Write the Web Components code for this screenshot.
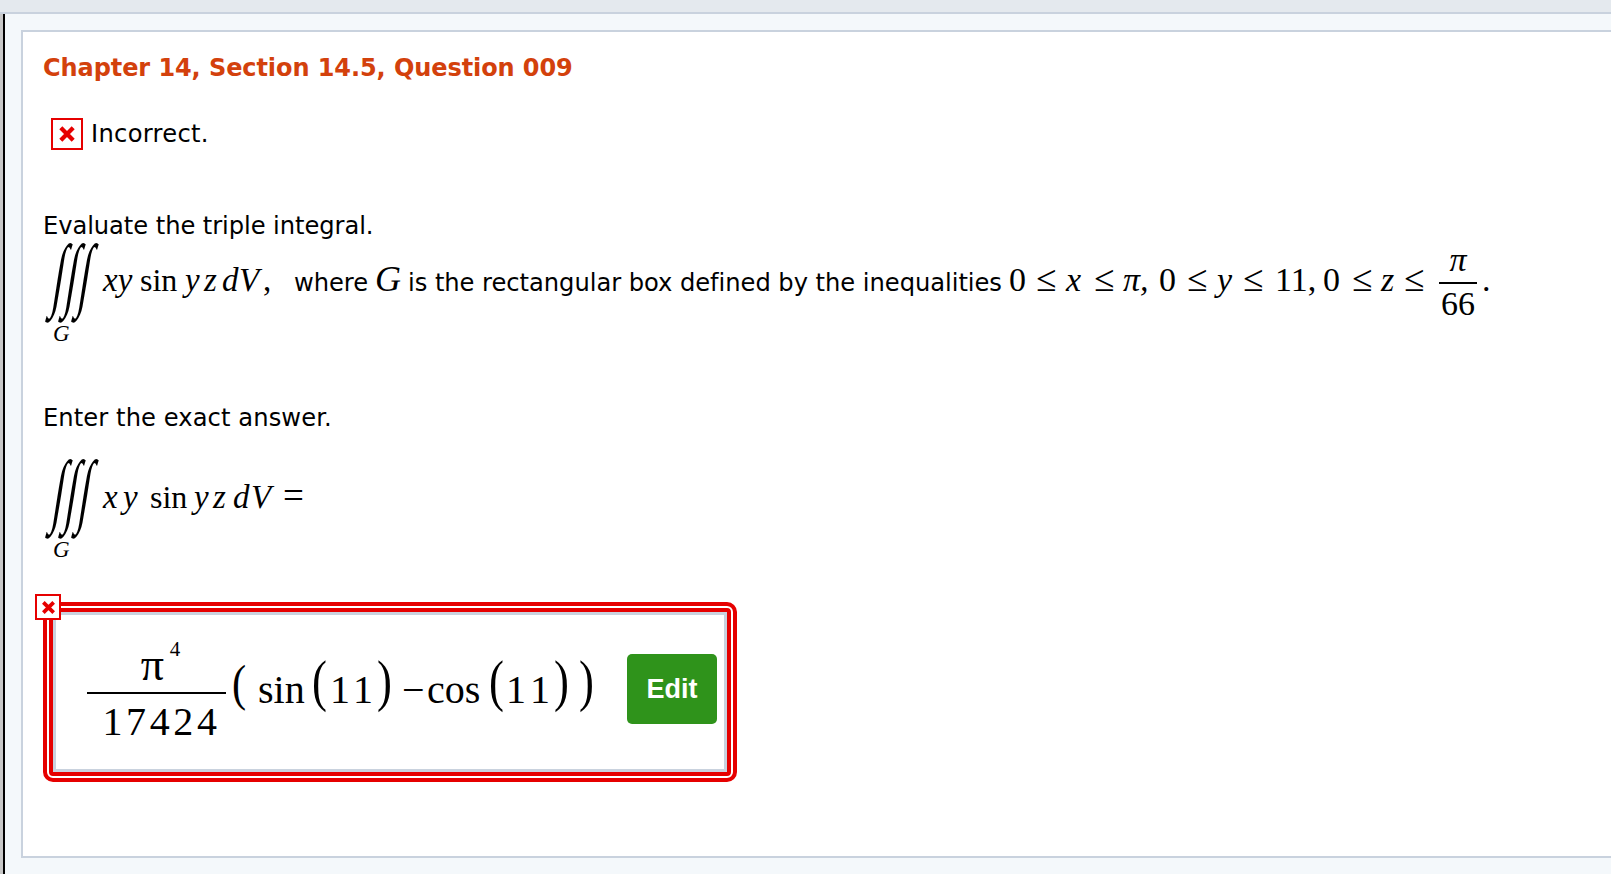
<!DOCTYPE html>
<html lang="en">
<head>
<meta charset="utf-8">
<title>Chapter 14, Section 14.5, Question 009</title>
<style>
  html, body { margin: 0; height: 100%; background: #f4f8fb; overflow: hidden; }
</style>
</head>
<body>
<quiz-page>
  <quiz-card>
    <h-title slot="title">Chapter 14, Section 14.5, Question 009</h-title>
    <status-line>Incorrect.</status-line>
    <prose-line top="60" spacing="-0.07">Evaluate the triple integral.</prose-line>
    <question-row></question-row>
    <prose-line top="60" spacing="0.08">Enter the exact answer.</prose-line>
    <prompt-row></prompt-row>
    <answer-box>
      <edit-button slot="action">Edit</edit-button>
    </answer-box>
  </quiz-card>
</quiz-page>

<script>
const SERIF = '"Liberation Serif", "Times New Roman", serif';
const SANS = '"DejaVu Sans", Verdana, sans-serif';

// [text, left x on the page, class]; each token gets the width up to the next one
function tokens(list) {
  return list.map(([text, x, cls], i) => {
    const next = list[i + 1];
    const w = next ? `width:${next[1] - x}px` : '';
    return `<span class="t ${cls || ''}" style="${w}">${text}</span>`;
  }).join('');
}

const TOKEN_CSS = `
  .run { display: flex; align-items: baseline; white-space: pre; font-family: ${SERIF}; color: #000; }
  .t { flex: none; display: block; }
  .i { font-style: italic; }
  .sans { font-family: ${SANS}; }
`;

class QuizPage extends HTMLElement {
  constructor() {
    super();
    this.attachShadow({ mode: 'open' });
    this.shadowRoot.innerHTML = `
      <style>
        :host { display: block; height: 874px; }
        .top { height: 12px; background: #e4e9ee; border-bottom: 2px solid #c9d2de; }
        .rail { height: 860px; box-sizing: border-box; border-left: 3px solid #c8c8c8; }
        .inner { height: 100%; box-sizing: border-box; border-left: 2px solid #000; padding: 16px 0 0 16px; }
      </style>
      <div class="top"></div>
      <div class="rail"><div class="inner"><slot></slot></div></div>
    `;
  }
}

class QuizCard extends HTMLElement {
  constructor() {
    super();
    this.attachShadow({ mode: 'open' });
    this.shadowRoot.innerHTML = `
      <style>
        :host {
          display: block;
          box-sizing: border-box;
          height: 828px;
          background: #fff;
          border: 2px solid #c9d2de;
          border-right: 0;
          padding: 20px 0 0 20px;
        }
      </style>
      <slot name="title"></slot>
      <slot></slot>
    `;
  }
}

class HTitle extends HTMLElement {
  constructor() {
    super();
    this.attachShadow({ mode: 'open' });
    this.shadowRoot.innerHTML = `
      <style>
        :host {
          display: block;
          font: bold 24px/32px ${SANS};
          letter-spacing: -0.08px;
          color: #d3410c;
          white-space: nowrap;
        }
      </style>
      <slot></slot>
    `;
  }
}

const CROSS = (size, w) => `<svg width="${size}" height="${size}" viewBox="0 0 16 16" aria-hidden="true">
  <path d="M2.5 2.5 L13.5 13.5 M13.5 2.5 L2.5 13.5" fill="none" stroke="#e60000" stroke-width="${w}"/></svg>`;

class StatusLine extends HTMLElement {
  constructor() {
    super();
    this.attachShadow({ mode: 'open' });
    this.shadowRoot.innerHTML = `
      <style>
        :host {
          display: flex;
          align-items: center;
          margin: 34px 0 0 8px;
          height: 32px;
          font: 24.2px/32px ${SANS};
          letter-spacing: 0.3px;
          color: #000;
        }
        .box {
          box-sizing: border-box;
          width: 32px;
          height: 32px;
          border: 2px solid #e60000;
          display: flex;
          align-items: center;
          justify-content: center;
          margin-right: 8px;
        }
      </style>
      <span class="box">${CROSS(18, 3.8)}</span>
      <slot></slot>
    `;
  }
}

class ProseLine extends HTMLElement {
  constructor() {
    super();
    this.attachShadow({ mode: 'open' });
    this.shadowRoot.innerHTML = `
      <style>
        :host {
          display: block;
          font: 24.2px/32px ${SANS};
          color: #000;
          white-space: nowrap;
        }
      </style>
      <slot></slot>
    `;
  }
  connectedCallback() {
    this.style.marginTop = `${this.getAttribute('top') || 0}px`;
    this.style.letterSpacing = `${this.getAttribute('spacing') || 0}px`;
  }
}

class TripleIntegral extends HTMLElement {
  constructor() {
    super();
    this.attachShadow({ mode: 'open' });
    this.shadowRoot.innerHTML = `
      <style>
        :host {
          display: block;
          flex: none;
          width: 58px;
          height: 100px;
          margin-left: 2px;
          font-family: ${SERIF};
          color: #000;
        }
        .signs {
          display: flex;
          height: 80px;
          align-items: center;
          font-size: 70px;
          line-height: 80px;
        }
        .signs span {
          display: block;
          flex: none;
          width: 13px;
          transform: translate(7px, -8px) skewX(-9deg) scale(.58, 1.16);
        }
        .sub { font: italic 23px/20px ${SERIF}; padding: 2px 0 0 8px; }
      </style>
      <div class="signs"><span>∫</span><span>∫</span><span>∫</span></div>
      <div class="sub">G</div>
    `;
  }
}

class MathFrac extends HTMLElement {
  constructor() {
    super();
    this.attachShadow({ mode: 'open' });
    this.shadowRoot.innerHTML = `
      <style>
        :host { display: flex; flex-direction: column; flex: none; text-align: center; font-family: ${SERIF}; color: #000; }
        .bar { background: #000; height: var(--bar, 2px); }
      </style>
      <slot name="num"></slot>
      <div class="bar"></div>
      <slot name="den"></slot>
    `;
  }
}

class QuestionRow extends HTMLElement {
  constructor() {
    super();
    this.attachShadow({ mode: 'open' });
    this.shadowRoot.innerHTML = `
      <style>
        :host { display: flex; align-items: flex-start; height: 100px; }
        ${TOKEN_CSS}
        .run { font-size: 33px; line-height: 40px; margin: 17px 0 0 0; }
        .fn { font-size: 32px; }
        .big { font-size: 34px; }
        .le { font-size: 37px; }
        .sans { font-size: 24.2px; letter-spacing: -0.04px; }
        .g { font-size: 36px; }
        math-frac { align-self: flex-start; margin-top: -21px; width: 38px; --bar: 2px; }
        math-frac span { display: block; font-size: 34px; line-height: 40px; }
        math-frac span[slot="num"] { line-height: 44px; }
        .dot { margin-left: 5px; }
      </style>
      <triple-integral></triple-integral>
      <div class="run">${tokens([
        ['xy', 103, 'i'], ['sin', 140, 'fn'], ['y', 185, 'i'], ['z', 204, 'i'], ['d', 222, 'i'],
        ['V', 239, 'i'], [',', 263], ['where', 294, 'sans'], ['G', 375, 'i g'],
        ['is the rectangular box defined by the inequalities', 408, 'sans'],
        ['0', 1009, 'big'], ['≤', 1036, 'le'], ['x', 1066, 'i big'], ['≤', 1094, 'le'],
        ['π,', 1123, 'i big'], ['0', 1159, 'big'], ['≤', 1187, 'le'], ['y', 1217, 'i big'],
        ['≤', 1243, 'le'], ['11,', 1275, 'big'], ['0', 1323, 'big'], ['≤', 1352, 'le'],
        ['z', 1381, 'i big'], ['≤', 1404, 'le'], ['', 1439]
      ])}<math-frac>
          <span slot="num" class="i">π</span>
          <span slot="den">66</span>
        </math-frac><span class="t big dot">.</span></div>
    `;
  }
}

class PromptRow extends HTMLElement {
  constructor() {
    super();
    this.attachShadow({ mode: 'open' });
    this.shadowRoot.innerHTML = `
      <style>
        :host { display: flex; align-items: flex-start; height: 100px; margin-top: 24px; }
        ${TOKEN_CSS}
        .run { font-size: 33px; line-height: 40px; margin-top: 18px; }
        .fn { font-size: 32px; }
        .eq { font-size: 37px; }
      </style>
      <triple-integral></triple-integral>
      <div class="run">${tokens([
        ['x', 103, 'i'], ['y', 123, 'i'], ['sin', 150, 'fn'], ['y', 194, 'i'], ['z', 213, 'i'],
        ['d', 233, 'i'], ['V', 251, 'i'], ['=', 283, 'eq']
      ])}</div>
    `;
  }
}

class AnswerBox extends HTMLElement {
  constructor() {
    super();
    this.attachShadow({ mode: 'open' });
    this.shadowRoot.innerHTML = `
      <style>
        :host {
          display: block;
          position: relative;
          box-sizing: border-box;
          width: 694px;
          height: 180px;
          margin: 44px 0 0 0;
          border: 4px solid #e60000;
          border-radius: 10px;
          padding: 2px;
          background: #fff;
        }
        .inner {
          box-sizing: border-box;
          height: 100%;
          border: 4px solid #e60000;
          border-radius: 4px;
        }
        .field {
          box-sizing: border-box;
          display: flex;
          align-items: flex-start;
          height: 100%;
          border: 3px solid #c9d2de;
          padding-left: 31px;
        }
        .badge {
          position: absolute;
          left: -12px;
          top: -12px;
          box-sizing: border-box;
          width: 26px;
          height: 26px;
          background: #fff;
          border: 2px solid #e60000;
          display: flex;
          align-items: center;
          justify-content: center;
        }
        ${TOKEN_CSS}
        math-frac { width: 139px; margin-top: 19px; --bar: 2px; }
        .num { display: block; font-size: 46px; line-height: 62px; height: 58px; padding-left: 8px; }
        .num sup { font-size: 21px; line-height: 0; vertical-align: 24px; margin-left: 6px; }
        .den { display: block; font-size: 40px; line-height: 56px; height: 52px; letter-spacing: 3.6px; padding-left: 10px; }
        .run { font-size: 40px; line-height: 48px; margin-top: 51px; }
        .p { font-size: 56px; transform: translateY(-3px) scaleX(.8); transform-origin: left bottom; line-height: 0; }
        .q { font-size: 50px; line-height: 0; transform: translateY(-3px) scaleX(.85); transform-origin: left bottom; }
      </style>
      <div class="inner"><div class="field">
        <math-frac>
          <span slot="num" class="num">π<sup>4</sup></span>
          <span slot="den" class="den">17424</span>
        </math-frac>
        <div class="run" style="margin-left:6px">${tokens([
          ['(', 232, 'q'], ['sin', 258], ['(', 312, 'p'], ['1', 330], ['1', 353], [')', 377, 'p'],
          ['−', 402], ['cos', 427], ['(', 489, 'p'], ['1', 506], ['1', 530], [')', 554, 'p'], [')', 579, 'p']
        ])}</div>
        <slot name="action"></slot>
      </div></div>
      <span class="badge">${CROSS(15, 4)}</span>
    `;
  }
}

class EditButton extends HTMLElement {
  constructor() {
    super();
    this.attachShadow({ mode: 'open' });
    this.shadowRoot.innerHTML = `
      <style>
        :host {
          display: flex;
          align-items: center;
          justify-content: center;
          flex: none;
          box-sizing: border-box;
          width: 90px;
          height: 70px;
          margin: 39px 7px 0 auto;
          border-radius: 5px;
          background: #2f931b;
          color: #fff;
          font: bold 27px/1 "Liberation Sans", Arial, sans-serif;
        }
      </style>
      <slot></slot>
    `;
  }
}

customElements.define('quiz-page', QuizPage);
customElements.define('quiz-card', QuizCard);
customElements.define('h-title', HTitle);
customElements.define('status-line', StatusLine);
customElements.define('prose-line', ProseLine);
customElements.define('triple-integral', TripleIntegral);
customElements.define('math-frac', MathFrac);
customElements.define('question-row', QuestionRow);
customElements.define('prompt-row', PromptRow);
customElements.define('answer-box', AnswerBox);
customElements.define('edit-button', EditButton);
</script>
</body>
</html>
